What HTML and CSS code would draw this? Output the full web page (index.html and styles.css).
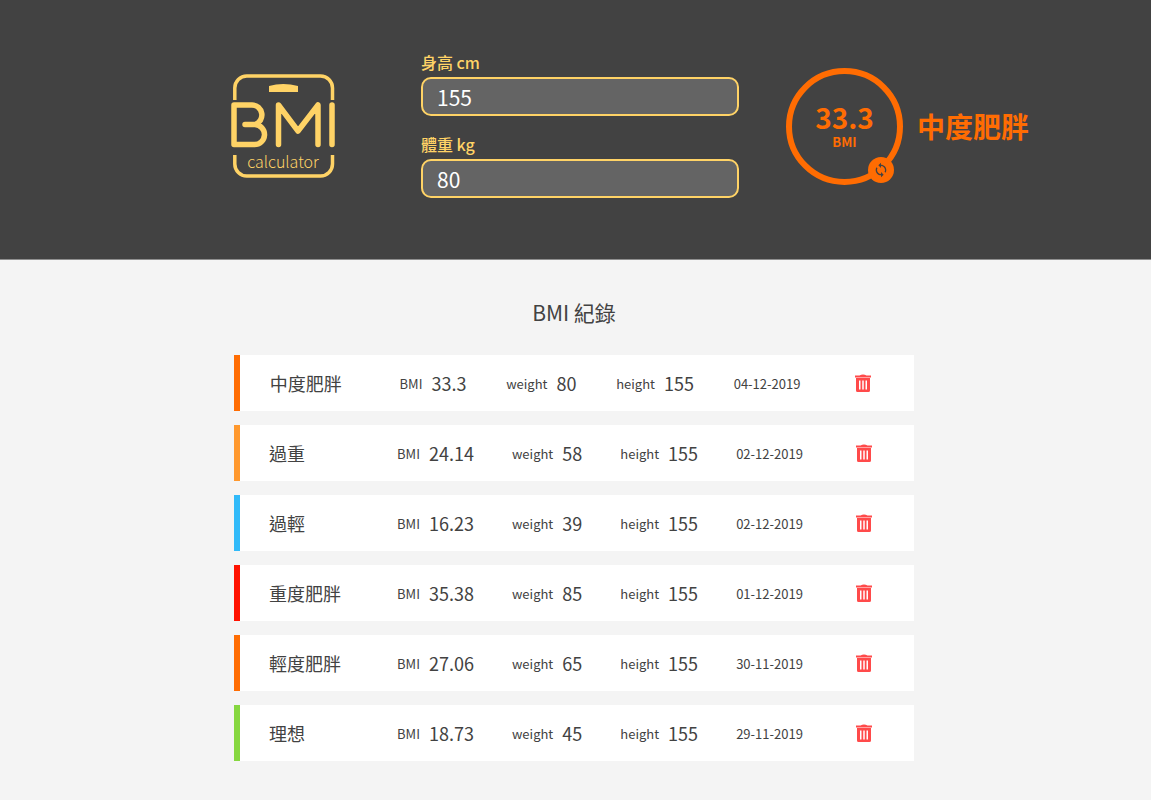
FILE: index.html
```
<!DOCTYPE html>
<html lang="zh-Hant">
<head>
    <meta charset="utf-8">
    <meta name="viewport" content="width=device-width, initial-scale=1">
    <title>BMI Calculator</title>
    <link rel="stylesheet" href="styles.css">
</head>
<body>
    <svg class="sprite">
        <symbol id="icon-trash" viewBox="0 0 18 20">
            <path d="M1 2.500h4.500Q9 .5 12.500 2.500H17V4.500H1z"/>
            <path fill-rule="evenodd" d="M2 5h14v12.500a1.500 1.500 0 0 1-1.500 1.500h-11A1.500 1.500 0 0 1 2 17.500zM5 7.500v9h1.500v-9zM8.250 7.500v9h1.500v-9zM11.500 7.500v9H13v-9z"/>
        </symbol>
    </svg>

    <!-- 計算區 -->
    <header class="header">
        <div class="header-inner">
            <a href="#" class="logo" aria-label="BMI calculator">
                <svg viewBox="0 0 104 104" width="104" height="104">
                    <g fill="none" stroke="#FFD366" stroke-linejoin="round">
                        <path stroke-width="3.500" d="M3.800 26V14A12 12 0 0 1 15.800 2H89.500A12 12 0 0 1 101.500 14V26M3.800 81V90A12 12 0 0 0 15.800 102H89.500A12 12 0 0 0 101.500 90V81"/>
                        <path stroke-width="5.500" stroke-linecap="round" d="M14 50.500H24A10 10 0 0 0 21 31H3V70.500H23A10 10 0 0 0 24 50.500M47.500 70.500V31L67 57L87 31V70.500M101 31V70.500"/>
                    </g>
                    <path fill="#FFD366" d="M38 12Q52 8 67 12V18H38z"/>
                    <text class="logo-text" x="52" y="94" text-anchor="middle">calculator</text>
                </svg>
            </a>
            <form class="form">
                <label class="form-label" for="height">身高 cm</label>
                <input class="form-input" id="height" type="text" value="155">
                <label class="form-label" for="weight">體重 kg</label>
                <input class="form-input" id="weight" type="text" value="80">
            </form>
            <div class="result">
                <div class="result-circle">
                    <span class="result-num">33.3</span>
                    <span class="result-unit">BMI</span>
                    <button class="result-reset" type="button" aria-label="重新計算">
                        <svg viewBox="0 0 24 24" width="16" height="16">
                            <path d="M12 4V1L8 5l4 4V6c3.310 0 6 2.690 6 6 0 1.010-.25 1.970-.7 2.800l1.460 1.460A7.930 7.930 0 0 0 20 12c0-4.420-3.580-8-8-8zm0 14c-3.310 0-6-2.690-6-6 0-1.010.25-1.970.7-2.800L5.240 7.740A7.930 7.930 0 0 0 4 12c0 4.420 3.580 8 8 8v3l4-4-4-4v3z"/>
                        </svg>
                    </button>
                </div>
                <p class="result-text">中度肥胖</p>
            </div>
        </div>
    </header>

    <!-- 紀錄列表 -->
    <main class="record">
        <h2 class="record-title">BMI 紀錄</h2>
        <ul class="record-list">
            <li class="record-item obese">
                <span class="status">中度肥胖</span>
                <span class="data"><small>BMI</small>33.3</span>
                <span class="data"><small>weight</small>80</span>
                <span class="data"><small>height</small>155</span>
                <span class="date">04-12-2019</span>
                <button class="delete" type="button" aria-label="刪除"><svg width="18" height="20"><use href="#icon-trash"/></svg></button>
            </li>
            <li class="record-item over">
                <span class="status">過重</span>
                <span class="data"><small>BMI</small>24.14</span>
                <span class="data"><small>weight</small>58</span>
                <span class="data"><small>height</small>155</span>
                <span class="date">02-12-2019</span>
                <button class="delete" type="button" aria-label="刪除"><svg width="18" height="20"><use href="#icon-trash"/></svg></button>
            </li>
            <li class="record-item light">
                <span class="status">過輕</span>
                <span class="data"><small>BMI</small>16.23</span>
                <span class="data"><small>weight</small>39</span>
                <span class="data"><small>height</small>155</span>
                <span class="date">02-12-2019</span>
                <button class="delete" type="button" aria-label="刪除"><svg width="18" height="20"><use href="#icon-trash"/></svg></button>
            </li>
            <li class="record-item serious">
                <span class="status">重度肥胖</span>
                <span class="data"><small>BMI</small>35.38</span>
                <span class="data"><small>weight</small>85</span>
                <span class="data"><small>height</small>155</span>
                <span class="date">01-12-2019</span>
                <button class="delete" type="button" aria-label="刪除"><svg width="18" height="20"><use href="#icon-trash"/></svg></button>
            </li>
            <li class="record-item obese">
                <span class="status">輕度肥胖</span>
                <span class="data"><small>BMI</small>27.06</span>
                <span class="data"><small>weight</small>65</span>
                <span class="data"><small>height</small>155</span>
                <span class="date">30-11-2019</span>
                <button class="delete" type="button" aria-label="刪除"><svg width="18" height="20"><use href="#icon-trash"/></svg></button>
            </li>
            <li class="record-item ideal">
                <span class="status">理想</span>
                <span class="data"><small>BMI</small>18.73</span>
                <span class="data"><small>weight</small>45</span>
                <span class="data"><small>height</small>155</span>
                <span class="date">29-11-2019</span>
                <button class="delete" type="button" aria-label="刪除"><svg width="18" height="20"><use href="#icon-trash"/></svg></button>
            </li>
        </ul>
    </main>
</body>
</html>
```
FILE: styles.css
```
* {
    box-sizing: border-box;
    margin: 0;
    padding: 0;
}
body {
    background-color: #F4F4F4;
    color: #424242;
    font-family: "Noto Sans CJK TC", sans-serif;
}
.sprite {
    display: none;
}

/* 計算區 */
.header {
    background-color: #424242;
    border-bottom: 1px solid #8F8F8F;
    padding: 50px 16px 57px;
}
.header-inner {
    display: flex;
    align-items: center;
    max-width: 907px;
    margin: 0 auto;
    padding-left: 109px;
}
.logo {
    display: block;
    height: 104px;
    flex: none;
    margin-right: 86px;
}
.logo-text {
    fill: #FFD366;
    font-size: 16px;
    font-weight: 300;
}
.form {
    flex: 1;
    padding-bottom: 4px;
}
.form-label {
    display: block;
    margin-bottom: 3px;
    color: #FFD366;
    font-size: 16px;
    font-weight: 500;
    line-height: 24px;
}
.form-input {
    display: block;
    width: 100%;
    height: 39px;
    padding: 0 14px;
    margin-bottom: 16px;
    background-color: #646464;
    border: 2px solid #FFD366;
    border-radius: 10px;
    color: #FFF;
    font-family: inherit;
    font-size: 21px;
    outline: none;
}
.form-input:last-child {
    margin-bottom: 0;
}
.result {
    display: flex;
    align-items: center;
    flex: none;
    margin-left: 47px;
    color: #FF6C02;
    font-weight: 700;
}
.result-circle {
    position: relative;
    display: flex;
    flex-direction: column;
    align-items: center;
    justify-content: center;
    width: 117px;
    height: 117px;
    border: 6px solid #FF6C02;
    border-radius: 50%;
}
.result-num {
    font-size: 28px;
    line-height: 32px;
}
.result-unit {
    font-size: 13px;
    line-height: 18px;
}
.result-reset {
    position: absolute;
    right: 3px;
    bottom: -4px;
    display: flex;
    align-items: center;
    justify-content: center;
    width: 26px;
    height: 26px;
    background-color: #FF6C02;
    border: none;
    border-radius: 50%;
    cursor: pointer;
}
.result-reset svg {
    fill: #424242;
}
.result-text {
    margin-left: 14px;
    font-size: 28px;
    line-height: 40px;
}

/* 紀錄列表 */
.record {
    max-width: 683px;
    margin: 0 auto;
    padding: 36px 3px 39px 0;
}
.record-title {
    font-size: 21px;
    font-weight: 400;
    line-height: 32px;
    text-align: center;
}
.record-list {
    list-style: none;
    margin-top: 27px;
}
.record-item {
    display: flex;
    align-items: center;
    justify-content: space-around;
    height: 56px;
    padding: 0 8px 0 10px;
    margin-bottom: 14px;
    background-color: #FFF;
    border-left: 6px solid #FF6C02;
}
.over {
    border-color: #FF982D;
}
.light {
    border-color: #31BAF9;
}
.serious {
    border-color: #FF1200;
}
.ideal {
    border-color: #86D73F;
}
.status {
    width: 90px;
    font-size: 18px;
}
.data {
    display: flex;
    align-items: center;
    font-size: 18px;
}
.data small {
    margin-right: 9px;
    font-size: 13px;
}
.date {
    font-size: 13px;
}
.delete {
    display: flex;
    justify-content: center;
    width: 46px;
    background: none;
    border: none;
    cursor: pointer;
}
.delete svg {
    fill: #FF4A4A;
}
```
